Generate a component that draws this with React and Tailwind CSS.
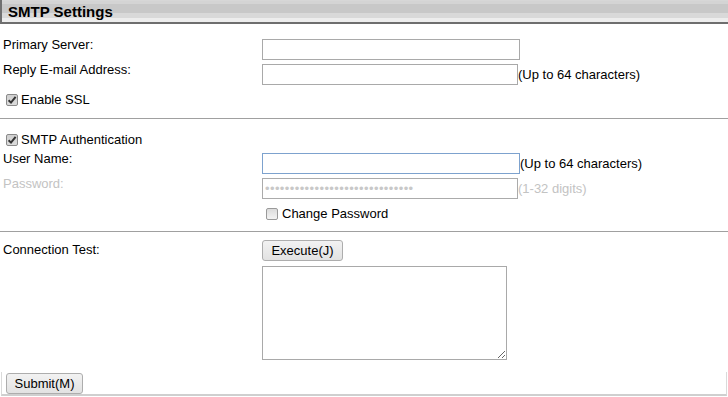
import React from "react";

function Check({ checked, className = "" }) {
  return (
    <span
      className={
        "inline-flex w-[12px] h-[12px] items-center justify-center rounded-[2px] border " +
        (checked
          ? "border-[#8a8a8a] bg-[linear-gradient(to_bottom,#d0d0d0,#dcdcdc)] "
          : "border-[#9a9a9a] bg-[linear-gradient(to_bottom,#dcdcdc,#f4f4f4)] ") +
        className
      }
    >
      {checked && (
        <svg width="10" height="10" viewBox="0 0 10 10">
          <path d="M1.6 5.2 L4 7.6 L8.6 1.8" fill="none" stroke="#333" strokeWidth="2" />
        </svg>
      )}
    </span>
  );
}

const inputBase = "h-[21px] border bg-white px-[2px] text-[13px] outline-none";

export default function App() {
  return (
    <div className="w-[728px] h-[397px] bg-white font-['Liberation_Sans',Arial,sans-serif] text-[13px] leading-[15px] text-black overflow-hidden">
      <div className="h-[24px] border-l-[2px] border-l-[#707070] border-b-[2px] border-b-[#6e6e6e] bg-[linear-gradient(to_bottom,#dadada_0px,#d4d4d4_1px,#d4d4d4_4px,#c8c8c8_4px,#c8c8c8_13px,#d9d9d9_13px,#d9d9d9_18px,#ededed_18px)] flex items-center pl-[6px]">
        <span className="text-[15px] font-bold leading-[17px]">SMTP Settings</span>
      </div>

      <div className="pt-[13px]">
        <div className="flex h-[25px]">
          <div className="w-[262px] pl-[3px]">Primary Server:</div>
          <input className={inputBase + " border-[#a9a9a9] w-[258px] mt-[2px]"} />
        </div>
        <div className="flex h-[25px]">
          <div className="w-[262px] pl-[3px]">Reply E-mail Address:</div>
          <input className={inputBase + " border-[#a9a9a9] w-[256px] mt-[2px]"} />
          <span className="mt-[5px]">(Up to 64 characters)</span>
        </div>
        <div className="flex h-[25px] items-center pl-[6px] gap-[3px]">
          <Check checked />
          <span>Enable SSL</span>
        </div>
        <div className="mt-[6px] border-t border-[#a0a0a0]" />

        <div className="mt-[9px] flex h-[23px] items-center pl-[6px] gap-[3px]">
          <Check checked />
          <span>SMTP Authentication</span>
        </div>
        <div className="flex h-[25px]">
          <div className="w-[262px] pl-[3px]">User Name:</div>
          <input className={inputBase + " border-[#7da2ce] w-[258px] mt-[2px]"} />
          <span className="mt-[5px]">(Up to 64 characters)</span>
        </div>
        <div className="flex h-[25px]">
          <div className="w-[262px] pl-[3px] text-[#c3c3c3]">Password:</div>
          <input
            type="password"
            disabled
            defaultValue="xxxxxxxxxxxxxxxxxxxxxxxxxxxxxx"
            className={inputBase + " border-[#ababab] w-[256px] mt-[2px] text-[#c8c8c8] text-[9px] tracking-[0.4px]"}
          />
          <span className="mt-[5px] text-[#c3c3c3]">(1-32 digits)</span>
        </div>
        <div className="flex h-[25px] items-center pl-[266px] gap-[4px]">
          <Check />
          <span>Change Password</span>
        </div>
        <div className="mt-[5px] border-t border-[#a0a0a0]" />

        <div className="mt-[8px] flex">
          <div className="w-[262px] pl-[3px] pt-[2px]">Connection Test:</div>
          <div className="flex flex-col items-start">
            <button className="h-[21px] w-[81px] rounded-[3px] border border-[#adadad] bg-[linear-gradient(to_bottom,#f2f2f2,#e2e2e2)] text-[13px] leading-[15px]">
              Execute(J)
            </button>
            <textarea className="mt-[5px] w-[245px] h-[94px] border border-[#a9a9a9] outline-none text-[13px]" />
          </div>
        </div>

        <div className="mt-[12px] mx-[1px] h-[24px] border-l border-r border-[#dadada] border-b-[2px] border-b-[#cfcfcf] flex items-end pl-[4px]">
          <button className="h-[21px] w-[77px] rounded-[3px] border border-[#adadad] bg-[linear-gradient(to_bottom,#f2f2f2,#e2e2e2)] text-[13px] leading-[15px]">
            Submit(M)
          </button>
        </div>
      </div>
    </div>
  );
}
